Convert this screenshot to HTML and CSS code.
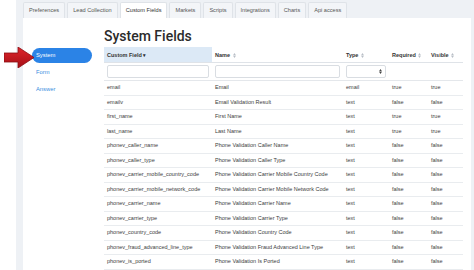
FILE: index.html
```html
<!DOCTYPE html>
<html lang="en">

<head>
  <meta charset="UTF-8" />
  <title>System Fields</title>
  <link rel="stylesheet" href="styles.css">
</head>

<body>
  <div class="app">
    <ul class="tabs">
      <li>Preferences</li>
      <li>Lead Collection</li>
      <li class="active">Custom Fields</li>
      <li>Markets</li>
      <li>Scripts</li>
      <li>Integrations</li>
      <li>Charts</li>
      <li>Api access</li>
    </ul>

    <div class="panel">
      <nav class="side">
        <a class="pill">System</a>
        <a>Form</a>
        <a>Answer</a>
      </nav>

      <main class="content">
        <h1>System Fields</h1>
        <table>
          <colgroup>
            <col class="c1"><col class="c2"><col class="c3"><col class="c4"><col class="c5">
          </colgroup>
          <thead>
            <tr class="head">
              <th class="sorted">Custom Field <span class="caret">&#9662;</span></th>
              <th>Name <svg class="sort" viewBox="0 0 4 7"><path d="M2 0 L4 3 H0 Z M0 4 H4 L2 7 Z"/></svg></th>
              <th>Type <svg class="sort" viewBox="0 0 4 7"><path d="M2 0 L4 3 H0 Z M0 4 H4 L2 7 Z"/></svg></th>
              <th>Required <svg class="sort" viewBox="0 0 4 7"><path d="M2 0 L4 3 H0 Z M0 4 H4 L2 7 Z"/></svg></th>
              <th>Visible <svg class="sort" viewBox="0 0 4 7"><path d="M2 0 L4 3 H0 Z M0 4 H4 L2 7 Z"/></svg></th>
            </tr>
            <tr class="filters">
              <td><div class="input"></div></td>
              <td><div class="input"></div></td>
              <td><div class="input select"><svg viewBox="0 0 4 7"><path d="M2 0 L4 3 H0 Z M0 4 H4 L2 7 Z"/></svg></div></td>
              <td></td>
              <td></td>
            </tr>
          </thead>
          <tbody id="rows"></tbody>
        </table>
      </main>
    </div>
  </div>

  <svg class="arrow" viewBox="0 0 30 21">
    <defs>
      <linearGradient id="red" x1="0" y1="0" x2="0" y2="1">
        <stop offset="0" stop-color="#e0262c" />
        <stop offset="1" stop-color="#a50f16" />
      </linearGradient>
    </defs>
    <path d="M0 6 H14 V0 L30 10.5 L14 21 V15 H0 Z" fill="url(#red)" stroke="#8c0c12" stroke-width="0.8" />
  </svg>

  <script>
    const fields = [
      ['email', 'Email', 'email', 'true', 'true'],
      ['emailv', 'Email Validation Result', 'text', 'false', 'false'],
      ['first_name', 'First Name', 'text', 'true', 'true'],
      ['last_name', 'Last Name', 'text', 'true', 'true'],
      ['phonev_caller_name', 'Phone Validation Caller Name', 'text', 'false', 'false'],
      ['phonev_caller_type', 'Phone Validation Caller Type', 'text', 'false', 'false'],
      ['phonev_carrier_mobile_country_code', 'Phone Validation Carrier Mobile Country Code', 'text', 'false', 'false'],
      ['phonev_carrier_mobile_network_code', 'Phone Validation Carrier Mobile Network Code', 'text', 'false', 'false'],
      ['phonev_carrier_name', 'Phone Validation Carrier Name', 'text', 'false', 'false'],
      ['phonev_carrier_type', 'Phone Validation Carrier Type', 'text', 'false', 'false'],
      ['phonev_country_code', 'Phone Validation Country Code', 'text', 'false', 'false'],
      ['phonev_fraud_advanced_line_type', 'Phone Validation Fraud Advanced Line Type', 'text', 'false', 'false'],
      ['phonev_is_ported', 'Phone Validation Is Ported', 'text', 'false', 'false']
    ];

    const tbody = document.getElementById('rows');
    fields.forEach(f => {
      const tr = document.createElement('tr');
      tr.innerHTML = f.map(v => `<td>${v}</td>`).join('');
      tbody.appendChild(tr);
    });
  </script>
</body>

</html>
```

FILE: styles.css
```css
body {
  margin: 0;
  background-color: #ffffff;
  font-family: 'Liberation Sans', Arial, sans-serif;
  color: #3a3a3a;
  overflow: hidden;
}

.app {
  margin-left: 16px;
  padding: 2px 3px 0 7px;
  background-color: #eef1f5;
  height: 270px;
  box-sizing: border-box;
}

.tabs {
  list-style: none;
  margin: 0;
  padding: 0;
  display: flex;
  gap: 2px;
  height: 16px;
}

.tabs li {
  font-size: 5.6px;
  line-height: 15px;
  padding: 0 5px;
  background-color: #f3f5f8;
  border: 1px solid #dfe3e8;
  border-bottom: none;
  border-radius: 2px 2px 0 0;
  color: #555;
}

.tabs li.active {
  background-color: #ffffff;
  color: #333;
}

.panel {
  display: flex;
  background-color: #ffffff;
  height: 252px;
}

.side {
  width: 81px;
  padding: 30px 0 0 9px;
  box-sizing: border-box;
  display: flex;
  flex-direction: column;
}

.side a {
  display: block;
  font-size: 5.8px;
  color: #3b8ee0;
  padding: 0 4px;
  line-height: 15px;
  height: 15px;
  margin-bottom: 2px;
}

.side a.pill {
  width: 60px;
  box-sizing: border-box;
  background-color: #2b83e6;
  color: #ffffff;
  border-radius: 8px;
}

.content {
  flex: 1;
  padding-right: 8px;
}

h1 {
  font-family: Roboto, sans-serif;
  font-weight: 500;
  font-size: 14px;
  line-height: 17px;
  color: #2b2b2b;
  margin: 10px 0 2px 0;
}

table {
  width: 359px;
  border-collapse: collapse;
  table-layout: fixed;
  font-size: 5.5px;
}

col.c1 { width: 108px; }
col.c2 { width: 131px; }
col.c3 { width: 46px; }
col.c4 { width: 39px; }
col.c5 { width: 35px; }

th,
td {
  text-align: left;
  padding: 0 3px;
  white-space: nowrap;
  overflow: hidden;
}

.head th {
  height: 15px;
  font-weight: 600;
  color: #333;
  border-bottom: 1px solid #dfe3e8;
}

.head th.sorted {
  background-color: #dce9f6;
}

.caret {
  font-size: 5px;
}

.sort {
  width: 3px;
  height: 5px;
  fill: #b8bec6;
  vertical-align: -1px;
  margin-left: 1px;
}

.filters td {
  height: 17px;
  border-bottom: 1px solid #e4e7eb;
}

.input {
  height: 13px;
  border: 1px solid #d9dde2;
  border-radius: 2px;
  box-sizing: border-box;
}

.select {
  display: flex;
  justify-content: flex-end;
  align-items: center;
  padding-right: 3px;
}

.select svg {
  width: 3px;
  height: 5px;
  fill: #444;
}

tbody td {
  height: 13.5px;
  line-height: 13.5px;
  padding-top: 0;
  padding-bottom: 0;
  border-bottom: 1px solid #e9ecef;
  color: #3d3d3d;
}

tbody tr {
  height: 14.5px;
}

.arrow {
  position: absolute;
  left: 4px;
  top: 47px;
  width: 30px;
  height: 21px;
}
```
